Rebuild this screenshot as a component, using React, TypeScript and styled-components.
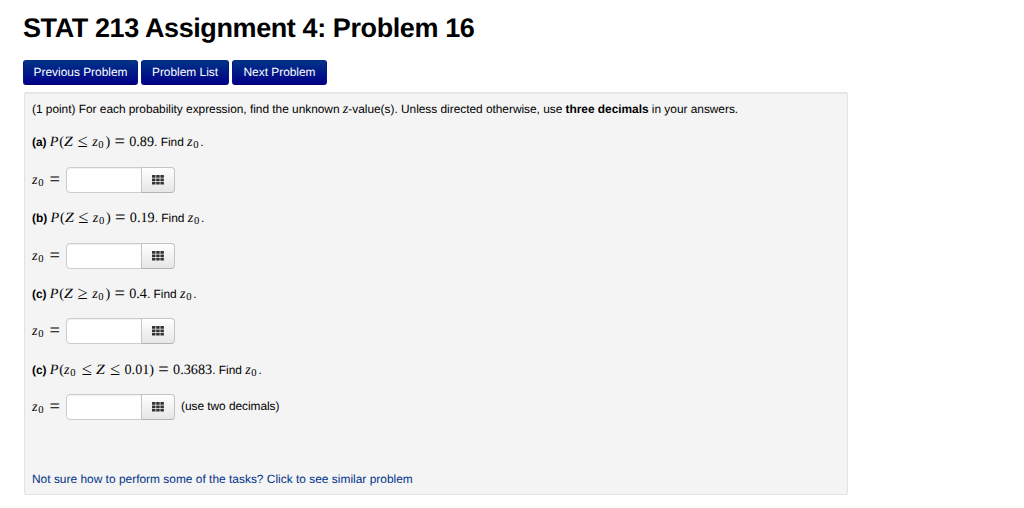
import React from "react";
import styled, { createGlobalStyle } from "styled-components";

const GlobalStyle = createGlobalStyle`
  * {
    box-sizing: border-box;
  }
  body {
    margin: 0;
    background: #fff;
    color: #000;
    font-family: "Liberation Sans", Arial, sans-serif;
    font-size: 11.9px;
    line-height: 18px;
    text-rendering: geometricPrecision;
  }
`;

const Page = styled.main`
  width: 848px;
  padding: 10px 0 0 24px;
`;

const Title = styled.h1`
  margin: 0 0 0 -1px;
  height: 50px;
  font-size: 27px;
  line-height: 36px;
  letter-spacing: -0.4px;
  white-space: nowrap;
`;

const NavBar = styled.nav`
  display: flex;
  gap: 3px;
  margin-left: -1px;
`;

const NavButton = styled.button<{ $width: number }>`
  width: ${(props) => props.$width}px;
  height: 25px;
  padding: 0;
  border: 1px solid #002a80;
  border-color: #003080 #001a80 #000070;
  border-radius: 3px;
  background: linear-gradient(#003388, #000088);
  color: #fff;
  font: inherit;
  line-height: 23px;
  text-rendering: inherit;
  white-space: nowrap;
`;

const Panel = styled.section`
  height: 403px;
  margin-top: 7px;
  padding: 7px;
  border: 1px solid #e3e3e3;
  border-radius: 2px;
  background: #f4f4f4;
  box-shadow: inset 0 1px 1px rgba(0, 0, 0, 0.05);
`;

const Intro = styled.p`
  margin: 0 0 10.3px;
  height: 18px;
  letter-spacing: -0.02px;
  white-space: nowrap;
`;

const Part = styled.div`
  height: 75.75px;
`;

const Question = styled.p`
  margin: 0;
  height: 38.7px;
  line-height: 28px;
  white-space: nowrap;
`;

const AnswerRow = styled.div`
  display: flex;
  align-items: center;
  height: 26px;
`;

const AnswerLabel = styled.span`
  width: 34px;
  white-space: nowrap;
`;

const Field = styled.input`
  width: 76px;
  height: 26px;
  padding: 0 5px;
  border: 1px solid #ccc;
  border-radius: 4px 0 0 4px;
  outline: none;
  background: #fff;
  box-shadow: inset 0 1px 1px rgba(0, 0, 0, 0.06);
  font: inherit;
`;

const KeypadButton = styled.button`
  display: flex;
  align-items: center;
  justify-content: center;
  width: 34px;
  height: 26px;
  margin-left: -1px;
  padding: 0;
  border: 1px solid #c4c4c4;
  border-bottom-color: #b3b3b3;
  border-radius: 0 4px 4px 0;
  background: linear-gradient(#fff, #e6e6e6);
`;

const Note = styled.span`
  margin: -2px 0 0 6px;
  letter-spacing: -0.04px;
`;

const Link = styled.a`
  display: block;
  margin-top: 38.5px;
  color: #003388;
  letter-spacing: 0.02px;
  text-decoration: none;
`;

const MathText = styled.span`
  font-family: "Liberation Serif", "Times New Roman", serif;
  font-size: 14.2px;
  line-height: 1;
  letter-spacing: 0;
  white-space: nowrap;
`;

const Sub = styled.span`
  display: inline-block;
  margin: 0 1.8px 0 0.6px;
  font-size: 10.6px;
  line-height: 0;
  transform: translateY(2px);
`;

const BigP = styled.i`
  margin-right: 0.8px;
`;

const BigZ = styled.i`
  display: inline-block;
  margin-right: 1.2px;
  line-height: 0;
  transform: scaleX(1.12);
  transform-origin: left;
`;

const Operator = styled.span`
  display: inline-block;
  width: 10.7px;
  margin: 0 4.2px;
  font-size: 18.5px;
  line-height: 0;
  text-align: center;
  transform: translateY(1px);
`;

const Z0 = () => (
  <>
    <i>z</i>
    <Sub>0</Sub>
  </>
);

const KeypadIcon = () => (
  <svg width="12" height="10" viewBox="0 0 12 10" fill="#333">
    {[0, 3.4, 6.8].map((y) =>
      [0, 4.2, 8.4].map((x) => (
        <rect key={`${x}-${y}`} x={x} y={y} width="3.5" height="2.7" rx="0.3" />
      ))
    )}
  </svg>
);

interface PartData {
  label: string;
  expression: React.ReactNode;
  value: string;
  note?: string;
}

const parts: PartData[] = [
  {
    label: "(a)",
    expression: (
      <>
        <BigZ>Z</BigZ>
        <Operator>≤</Operator>
        <Z0 />
      </>
    ),
    value: "0.89",
  },
  {
    label: "(b)",
    expression: (
      <>
        <BigZ>Z</BigZ>
        <Operator>≤</Operator>
        <Z0 />
      </>
    ),
    value: "0.19",
  },
  {
    label: "(c)",
    expression: (
      <>
        <BigZ>Z</BigZ>
        <Operator>≥</Operator>
        <Z0 />
      </>
    ),
    value: "0.4",
  },
  {
    label: "(c)",
    expression: (
      <>
        <Z0 />
        <Operator>≤</Operator>
        <BigZ>Z</BigZ>
        <Operator>≤</Operator>
        0.01
      </>
    ),
    value: "0.3683",
    note: "(use two decimals)",
  },
];

const App: React.FC = () => {
  return (
    <>
      <GlobalStyle />
      <Page>
        <Title>STAT 213 Assignment 4: Problem 16</Title>
        <NavBar>
          <NavButton $width={115}>Previous Problem</NavButton>
          <NavButton $width={88}>Problem List</NavButton>
          <NavButton $width={95}>Next Problem</NavButton>
        </NavBar>
        <Panel>
          <Intro>
            (1 point) For each probability expression, find the unknown{" "}
            <MathText>
              <i>z</i>
            </MathText>
            -value(s). Unless directed otherwise, use <b>three decimals</b> in
            your answers.
          </Intro>
          {parts.map((part, index) => (
            <Part key={index}>
              <Question>
                <b>{part.label}</b>{" "}
                <MathText>
                  <BigP>P</BigP>({part.expression})<Operator>=</Operator>
                  {part.value}
                </MathText>
                . Find{" "}
                <MathText>
                  <Z0 />
                </MathText>
                .
              </Question>
              <AnswerRow>
                <AnswerLabel>
                  <MathText>
                    <Z0 />
                    <Operator>=</Operator>
                  </MathText>
                </AnswerLabel>
                <Field aria-label={`Answer ${index + 1}`} />
                <KeypadButton aria-label="Open keypad">
                  <KeypadIcon />
                </KeypadButton>
                {part.note && <Note>{part.note}</Note>}
              </AnswerRow>
            </Part>
          ))}
          <Link href="#">
            Not sure how to perform some of the tasks? Click to see similar
            problem
          </Link>
        </Panel>
      </Page>
    </>
  );
};

export default App;
